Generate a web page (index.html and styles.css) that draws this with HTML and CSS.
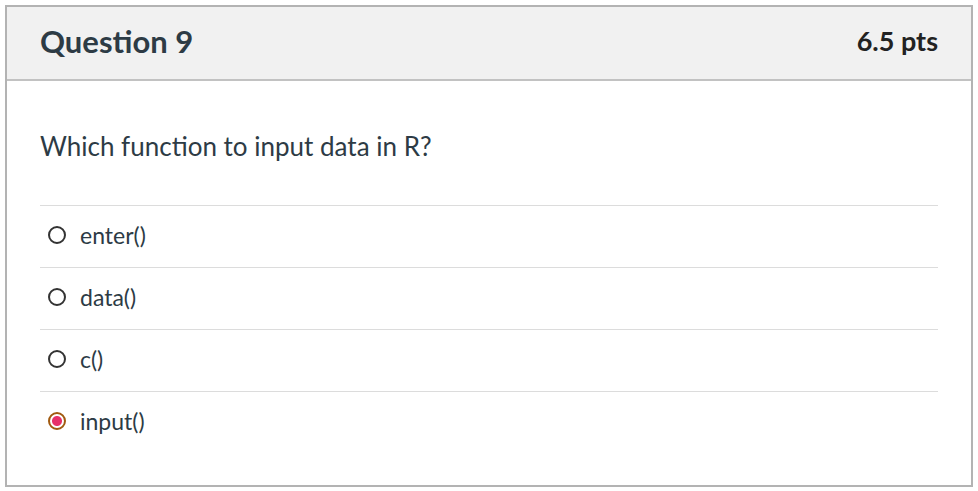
FILE: index.html
```html
<!DOCTYPE html>
<html lang="en">
<head>
<meta charset="utf-8">
<title>Question 9</title>
<link rel="stylesheet" href="styles.css">
</head>
<body>
<div class="card">
  <div class="card-header">
    <h2 class="q-title">Question 9</h2>
    <span class="q-points">6.5 pts</span>
  </div>
  <div class="card-body">
    <p class="q-text">Which function to input data in R?</p>
    <ul class="answers">
      <li class="answer"><span class="radio"></span><span class="label">enter()</span></li>
      <li class="answer"><span class="radio"></span><span class="label">data()</span></li>
      <li class="answer"><span class="radio"></span><span class="label">c()</span></li>
      <li class="answer"><span class="radio checked"></span><span class="label">input()</span></li>
    </ul>
  </div>
</div>
</body>
</html>
```

FILE: styles.css
```css
html, body {
  margin: 0;
  padding: 0;
  background: #ffffff;
}

body {
  font-family: Lato, "Open Sans", "Liberation Sans", sans-serif;
  color: #2d3b45;
}

.card {
  margin: 5px;
  height: 478px;
  border: 2px solid #b3b3b3;
  background: #ffffff;
}

.card-header {
  height: 74px;
  box-sizing: border-box;
  padding: 0 33px 5px;
  border-bottom: 2px solid #c2c2c2;
  background: #f1f1f1;
  display: flex;
  align-items: center;
  justify-content: space-between;
}

.q-title {
  margin: 0;
  font-size: 31px;
  font-weight: 700;
  color: #2d3b45;
}

.q-points {
  font-size: 27px;
  font-weight: 700;
  color: #222;
}

.card-body {
  padding: 0 33px;
}

.q-text {
  margin: 50px 0 44px;
  font-size: 26px;
  line-height: 30px;
  color: #2d3b45;
}

.answers {
  list-style: none;
  margin: 0;
  padding: 0;
}

.answer {
  height: 62px;
  box-sizing: border-box;
  border-top: 1px solid #dcdcdc;
  display: flex;
  align-items: center;
  padding: 0 0 4px 8px;
}

.radio {
  width: 14px;
  height: 14px;
  border: 2px solid #333;
  border-radius: 50%;
  margin-right: 14px;
  flex: none;
}

.radio.checked {
  border: 2px solid #a15a10;
  background: radial-gradient(circle, #e6306a 0 4.5px, #ffffff 5.5px);
}

.label {
  font-size: 23px;
  color: #2d3b45;
}
```
